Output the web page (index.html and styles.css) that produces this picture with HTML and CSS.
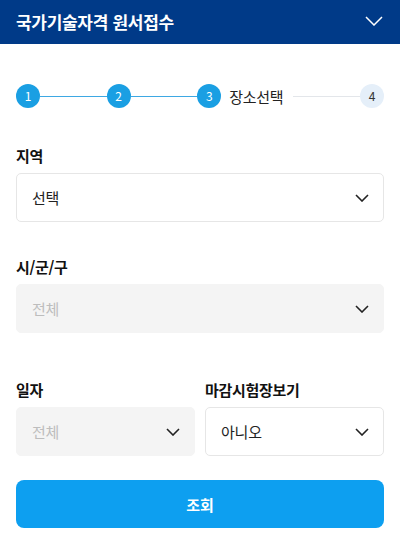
FILE: index.html
```html
<!DOCTYPE html>
<html lang="ko">
<head>
<meta charset="utf-8">
<title>국가기술자격 원서접수</title>
<link rel="stylesheet" href="styles.css">
</head>
<body>
<header class="topbar">
  <h1 class="title">국가기술자격 원서접수</h1>
  <svg class="top-chevron" width="18" height="10" viewBox="0 0 18 10"><path d="M1 1 L9 9 L17 1" fill="none" stroke="#fff" stroke-width="1.5"/></svg>
</header>
<main class="content">
  <ol class="stepper">
    <li class="step done">1</li>
    <li class="line active"></li>
    <li class="step done">2</li>
    <li class="line active"></li>
    <li class="step done">3</li>
    <li class="step-label">장소선택</li>
    <li class="line"></li>
    <li class="step todo">4</li>
  </ol>

  <section class="field first">
    <div class="label">지역</div>
    <div class="select">
      <span class="value">선택</span>
      <svg class="chev" width="14" height="8" viewBox="0 0 14 8"><path d="M1 1 L7 7 L13 1" fill="none" stroke="#222" stroke-width="1.6"/></svg>
    </div>
  </section>

  <section class="field second">
    <div class="label">시/군/구</div>
    <div class="select disabled">
      <span class="value">전체</span>
      <svg class="chev" width="14" height="8" viewBox="0 0 14 8"><path d="M1 1 L7 7 L13 1" fill="none" stroke="#222" stroke-width="1.6"/></svg>
    </div>
  </section>

  <div class="row">
    <section class="field">
      <div class="label">일자</div>
      <div class="select disabled">
        <span class="value">전체</span>
        <svg class="chev" width="14" height="8" viewBox="0 0 14 8"><path d="M1 1 L7 7 L13 1" fill="none" stroke="#222" stroke-width="1.6"/></svg>
      </div>
    </section>
    <section class="field">
      <div class="label">마감시험장보기</div>
      <div class="select">
        <span class="value">아니오</span>
        <svg class="chev" width="14" height="8" viewBox="0 0 14 8"><path d="M1 1 L7 7 L13 1" fill="none" stroke="#222" stroke-width="1.6"/></svg>
      </div>
    </section>
  </div>

  <button class="search" type="button">조회</button>
</main>
</body>
</html>
```
FILE: styles.css
```css
* { box-sizing: border-box; }
html, body { margin: 0; padding: 0; background: #fff; }
body {
  font-family: "Noto Sans CJK KR", "Noto Sans", sans-serif;
  color: #111;
}
.topbar {
  height: 44px;
  background: #003a88;
  display: flex;
  align-items: center;
  justify-content: space-between;
  padding: 0 17px 0 16px;
}
.title {
  margin: 0;
  color: #fff;
  font-size: 17px;
  font-weight: 700;
  letter-spacing: -0.3px;
  line-height: 44px;
}
.top-chevron { display: block; margin-top: -2px; }
.content { padding: 0 16px; }
.stepper {
  list-style: none;
  margin: 40px 0 0;
  padding: 0;
  display: flex;
  align-items: center;
  height: 24px;
}
.step {
  width: 24px;
  height: 24px;
  border-radius: 50%;
  display: flex;
  align-items: center;
  justify-content: center;
  font-size: 12px;
  flex: none;
  line-height: 1;
}
.step.done { background: #1a9fe3; color: #fff; }
.step.todo { background: #e5eff9; color: #333; }
.step-label {
  margin-left: 8px;
  font-size: 15px;
  letter-spacing: -0.3px;
  color: #222;
  flex: none;
}
.line { flex: 1; height: 1px; background: #3ea8e3; }
.line:not(.active) { background: #e3e6ea; margin-left: 10px; }
.field { display: flex; flex-direction: column; }
.field.first { margin-top: 37px; }
.field.second { margin-top: 34px; }
.label {
  font-size: 15px;
  font-weight: 700;
  line-height: 22px;
  height: 22px;
  margin-bottom: 6px;
  color: #111;
  letter-spacing: -0.3px;
}
.select {
  height: 49px;
  border: 1px solid #e6e6e6;
  border-radius: 5px;
  background: #fff;
  display: flex;
  align-items: center;
  justify-content: space-between;
  padding: 0 14px 0 15px;
}
.select.disabled { background: #f4f4f4; border-color: #f4f4f4; }
.value { font-size: 15px; color: #222; letter-spacing: -0.2px; }
.select.disabled .value { color: #bdbdbd; }
.chev { display: block; }
.row {
  display: grid;
  grid-template-columns: 1fr 1fr;
  column-gap: 10px;
  margin-top: 46px;
}
.search {
  display: block;
  width: 100%;
  height: 48px;
  margin-top: 24px;
  border: 0;
  border-radius: 8px;
  background: #0d9ff0;
  color: #fff;
  font-family: inherit;
  font-size: 15px;
  font-weight: 700;
}
```
